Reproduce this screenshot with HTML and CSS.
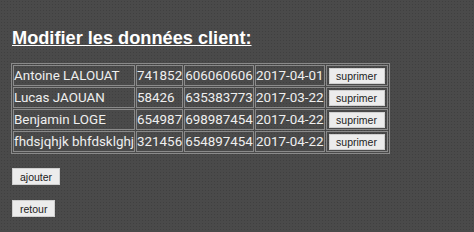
FILE: index.html
```html
<!DOCTYPE html>
<html lang="fr">
<head>
  <meta charset="UTF-8" />
  <title>Modifier les données client</title>
  <link rel="stylesheet" href="styles.css">
</head>
<body>

  <h2>Modifier les données client:</h2>

  <table class="clients" border="1">
    <tr>
      <td>Antoine LALOUAT</td>
      <td>741852</td>
      <td>606060606</td>
      <td>2017-04-01</td>
      <td><button class="btn">suprimer</button></td>
    </tr>
    <tr>
      <td>Lucas JAOUAN</td>
      <td>58426</td>
      <td>635383773</td>
      <td>2017-03-22</td>
      <td><button class="btn">suprimer</button></td>
    </tr>
    <tr>
      <td>Benjamin LOGE</td>
      <td>654987</td>
      <td>698987454</td>
      <td>2017-04-22</td>
      <td><button class="btn">suprimer</button></td>
    </tr>
    <tr>
      <td>fhdsjqhjk bhfdsklghj</td>
      <td>321456</td>
      <td>654897454</td>
      <td>2017-04-22</td>
      <td><button class="btn">suprimer</button></td>
    </tr>
  </table>

  <div class="actions">
    <button class="btn">ajouter</button>
    <button class="btn">retour</button>
  </div>

</body>
</html>
```

FILE: styles.css
```css
body {
  font-family: 'Liberation Sans', Arial, sans-serif;
  margin: 0;
  padding: 0 11px;
  background-color: #4a4a4a;
  background-image: radial-gradient(rgba(0,0,0,0.14) 1px, transparent 1px);
  background-size: 3px 3px;
  color: #efefef;
}

h2 {
  margin: 28px 0 14px 1px;
  font-size: 18.2px;
  text-decoration: underline;
  color: #fff;
}

.clients {
  border-collapse: separate;
  border-spacing: 1px;
  border: 1px solid #8a8a8a;
  font-family: Roboto, 'Liberation Sans', Arial, sans-serif;
  font-size: 13.4px;
}

.clients td {
  border: 1px solid #8a8a8a;
  padding: 2px 0 1px;
  white-space: nowrap;
  line-height: 16px;
}

.btn {
  font-family: 'Liberation Sans', Arial, sans-serif;
  font-size: 10.5px;
  height: 17px;
  background: #ececec;
  color: #222;
  border: 1px solid #cfcfcf;
  padding: 0 7px;
  border-radius: 0;
}

.clients .btn {
  display: block;
  height: 16px;
  width: 56px;
  margin: 0 2px;
  padding: 0;
}

.actions {
  display: flex;
  flex-direction: column;
  align-items: flex-start;
  gap: 15px;
  margin-top: 14px;
  padding-left: 1px;
}
```
